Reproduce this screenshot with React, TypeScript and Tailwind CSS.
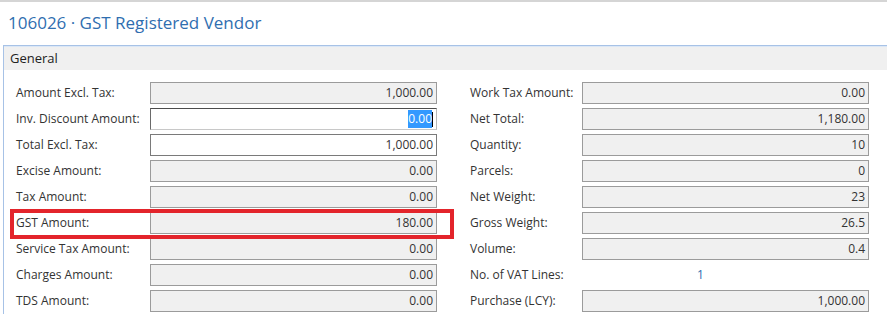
import React from 'react';

type Field = {
  label: string;
  value: string;
  kind?: 'readonly' | 'edit' | 'focus' | 'link';
};

const leftFields: Field[] = [
  { label: 'Amount Excl. Tax:', value: '1,000.00' },
  { label: 'Inv. Discount Amount:', value: '0.00', kind: 'focus' },
  { label: 'Total Excl. Tax:', value: '1,000.00', kind: 'edit' },
  { label: 'Excise Amount:', value: '0.00' },
  { label: 'Tax Amount:', value: '0.00' },
  { label: 'GST Amount:', value: '180.00' },
  { label: 'Service Tax Amount:', value: '0.00' },
  { label: 'Charges Amount:', value: '0.00' },
  { label: 'TDS Amount:', value: '0.00' },
];

const rightFields: Field[] = [
  { label: 'Work Tax Amount:', value: '0.00' },
  { label: 'Net Total:', value: '1,180.00' },
  { label: 'Quantity:', value: '10' },
  { label: 'Parcels:', value: '0' },
  { label: 'Net Weight:', value: '23' },
  { label: 'Gross Weight:', value: '26.5' },
  { label: 'Volume:', value: '0.4' },
  { label: 'No. of VAT Lines:', value: '1', kind: 'link' },
  { label: 'Purchase (LCY):', value: '1,000.00' },
];

function FieldBox({ field }: { field: Field }) {
  if (field.kind === 'link') {
    return (
      <div className="flex h-[22px] w-[287px] items-center pl-[115px] text-[#2f6eb0]">
        {field.value}
      </div>
    );
  }
  if (field.kind === 'focus') {
    return (
      <div className="flex h-[22px] w-[287px] items-center justify-end border border-t-[#4c4c4c] border-l-[#6a6a6a] border-r-[#b8b8b8] border-b-[#c8c8c8] bg-white pr-[3px]">
        <span className="bg-[#3399ff] text-white">{field.value}</span>
        <span className="h-[15px] w-px bg-black" />
      </div>
    );
  }
  const bg = field.kind === 'edit' ? 'bg-white border-[#7a7a7a]' : 'bg-[#f0f0f0] border-[#9b9b9b]';
  return (
    <div className={`flex h-[22px] w-[287px] items-center justify-end border pr-[3px] text-[#333] ${bg}`}>
      {field.value}
    </div>
  );
}

function Column({ fields, labelWidth }: { fields: Field[]; labelWidth: string }) {
  return (
    <div className="flex flex-col">
      {fields.map((f) => (
        <div key={f.label} className="flex h-[26px] items-center">
          <div className={`${labelWidth} text-[#333]`}>{f.label}</div>
          <FieldBox field={f} />
        </div>
      ))}
    </div>
  );
}

export default function App() {
  return (
    <div
      className="relative h-[320px] w-[887px] overflow-hidden bg-white text-[12px]"
      style={{ fontFamily: '"Open Sans", "Noto Sans", Arial, sans-serif' }}
    >
      <div className="h-[2px] bg-[#d5d5d5]" />
      <div className="flex h-[43px] items-center pl-[8px] pb-[2px] text-[17px] text-[#2f6eb0]">
        106026 · GST Registered Vendor
      </div>
      <div className="ml-[3px] border-l border-t border-[#a7c2e6]">
        <div className="flex h-[24px] items-center border-t border-[#dbe7f6] bg-[#f0f0f0] pl-[6px] text-[13px] text-[#222]">
          General
        </div>
        <div className="flex gap-[33px] pl-[12px] pt-[10px]">
          <Column fields={leftFields} labelWidth="w-[134px]" />
          <Column fields={rightFields} labelWidth="w-[112px]" />
        </div>
      </div>
      <div className="absolute left-[10px] top-[209px] h-[30px] w-[444px] border-4 border-[#e3242b]" />
    </div>
  );
}
